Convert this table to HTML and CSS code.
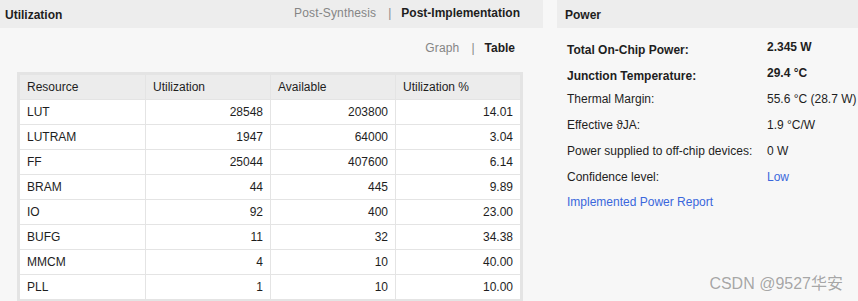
FILE: index.html
```html
<!DOCTYPE html>
<html>
<head>
  <title>Project Summary</title>
  <link rel="stylesheet" href="styles.css">
</head>
<body>
  <div class="page">
    <section class="panel util-panel">
      <div class="panel-header">
        <h2>Utilization</h2>
        <div class="tabs">
          <span class="tab">Post-Synthesis</span>
          <span class="sep">|</span>
          <span class="tab active">Post-Implementation</span>
        </div>
      </div>

      <div class="view-toggle">
        <span class="tab">Graph</span>
        <span class="sep">|</span>
        <span class="tab active">Table</span>
      </div>

      <table class="util-table">
        <thead>
          <tr>
            <th>Resource</th>
            <th>Utilization</th>
            <th>Available</th>
            <th>Utilization %</th>
          </tr>
        </thead>
        <tbody>
          <tr><td>LUT</td><td class="num">28548</td><td class="num">203800</td><td class="num">14.01</td></tr>
          <tr><td>LUTRAM</td><td class="num">1947</td><td class="num">64000</td><td class="num">3.04</td></tr>
          <tr><td>FF</td><td class="num">25044</td><td class="num">407600</td><td class="num">6.14</td></tr>
          <tr><td>BRAM</td><td class="num">44</td><td class="num">445</td><td class="num">9.89</td></tr>
          <tr><td>IO</td><td class="num">92</td><td class="num">400</td><td class="num">23.00</td></tr>
          <tr><td>BUFG</td><td class="num">11</td><td class="num">32</td><td class="num">34.38</td></tr>
          <tr><td>MMCM</td><td class="num">4</td><td class="num">10</td><td class="num">40.00</td></tr>
          <tr><td>PLL</td><td class="num">1</td><td class="num">10</td><td class="num">10.00</td></tr>
        </tbody>
      </table>
    </section>

    <section class="panel power-panel">
      <div class="panel-header">
        <h2>Power</h2>
      </div>

      <div class="power-grid">
        <span class="label strong">Total On-Chip Power:</span>
        <span class="value strong">2.345 W</span>
        <span class="label strong">Junction Temperature:</span>
        <span class="value strong">29.4 °C</span>
        <span class="label">Thermal Margin:</span>
        <span class="value">55.6 °C (28.7 W)</span>
        <span class="label">Effective ϑJA:</span>
        <span class="value">1.9 °C/W</span>
        <span class="label">Power supplied to off-chip devices:</span>
        <span class="value">0 W</span>
        <span class="label">Confidence level:</span>
        <span class="value"><a href="#">Low</a></span>
        <a class="report-link" href="#">Implemented Power Report</a>
      </div>
    </section>

    <div class="watermark">CSDN @9527华安</div>
  </div>
</body>
</html>
```

FILE: styles.css
```css
body {
  margin: 0;
  padding: 0;
  background: #f7f7f7;
  font-family: 'Liberation Sans', Arial, sans-serif;
  font-size: 12px;
  color: #1e1e1e;
}

.page {
  position: relative;
  display: flex;
  gap: 14px;
  height: 301px;
  overflow: hidden;
}

.panel-header {
  display: flex;
  justify-content: space-between;
  align-items: center;
  height: 28px;
  padding: 0 23px 2px 5px;
  box-sizing: border-box;
  background: #ededed;
}

.panel-header h2 {
  margin: 0;
  font-size: 12px;
  font-weight: bold;
  color: #1e1e1e;
  padding-top: 3px;
}

.util-panel {
  width: 543px;
  flex: none;
}

.tabs,
.view-toggle {
  display: flex;
  align-items: center;
  gap: 10px;
}

.tab {
  color: #858585;
  letter-spacing: 0.15px;
}

.tab.active {
  color: #1e1e1e;
  font-weight: bold;
  letter-spacing: 0;
}

.sep {
  color: #888;
  margin-left: 2px;
}

.view-toggle {
  justify-content: flex-end;
  padding-right: 28px;
  margin-top: 12px;
  line-height: 16px;
}

.util-table {
  margin: 16px 0 0 17px;
  width: 506px;
  table-layout: fixed;
  border-collapse: separate;
  border-spacing: 0;
  border: 3px solid #e4e4e4;
  background: #fff;
}

.util-table th,
.util-table td {
  height: 24px;
  padding: 0 7px;
  line-height: 24px;
  text-align: left;
  font-weight: normal;
  border-left: 1px solid #e4e4e4;
  white-space: nowrap;
}

.util-table th:first-child,
.util-table td:first-child {
  border-left: none;
}

.util-table th {
  background: #ececec;
}

.util-table td {
  border-top: 1px solid #e4e4e4;
}

.util-table td.num {
  text-align: right;
}

.power-panel {
  flex: 1;
  min-width: 0;
}

.power-panel .panel-header {
  padding-left: 8px;
}

.power-grid {
  display: grid;
  grid-template-columns: 200px auto;
  grid-auto-rows: 26px;
  padding: 6px 0 0 10px;
  white-space: nowrap;
}

.power-grid .label,
.power-grid .value {
  line-height: 26px;
}

.power-grid .label.strong {
  line-height: 32px;
}

.power-grid .strong {
  font-weight: bold;
}

.power-grid a {
  color: #3a67dc;
  text-decoration: none;
}

.report-link {
  grid-column: 1 / 3;
  line-height: 24px;
}

.watermark {
  position: absolute;
  right: 15px;
  top: 274px;
  font-family: 'Liberation Sans', 'Noto Sans CJK SC', sans-serif;
  font-size: 16px;
  line-height: 20px;
  color: rgba(120, 120, 120, 0.65);
}
```
